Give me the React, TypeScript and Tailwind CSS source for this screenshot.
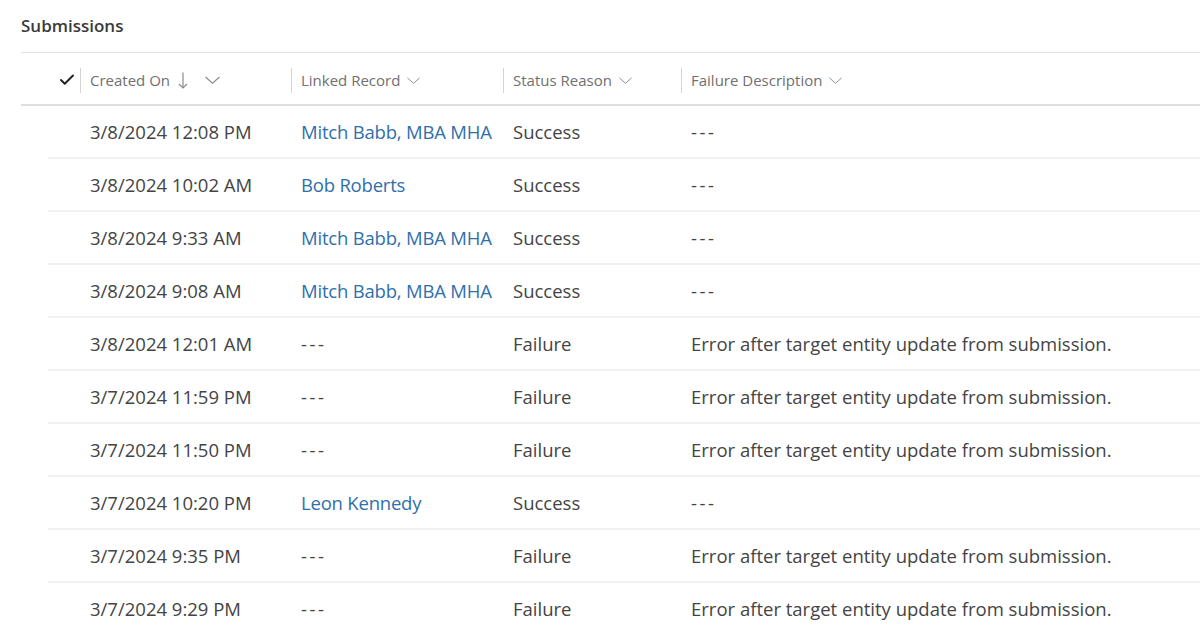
import { Check } from "lucide-react";

type Row = { created: string; linked: string | null; status: string; failure: string | null };

const rows: Row[] = [
  { created: "3/8/2024 12:08 PM", linked: "Mitch Babb, MBA MHA", status: "Success", failure: null },
  { created: "3/8/2024 10:02 AM", linked: "Bob Roberts", status: "Success", failure: null },
  { created: "3/8/2024 9:33 AM", linked: "Mitch Babb, MBA MHA", status: "Success", failure: null },
  { created: "3/8/2024 9:08 AM", linked: "Mitch Babb, MBA MHA", status: "Success", failure: null },
  { created: "3/8/2024 12:01 AM", linked: null, status: "Failure", failure: "Error after target entity update from submission." },
  { created: "3/7/2024 11:59 PM", linked: null, status: "Failure", failure: "Error after target entity update from submission." },
  { created: "3/7/2024 11:50 PM", linked: null, status: "Failure", failure: "Error after target entity update from submission." },
  { created: "3/7/2024 10:20 PM", linked: "Leon Kennedy", status: "Success", failure: null },
  { created: "3/7/2024 9:35 PM", linked: null, status: "Failure", failure: "Error after target entity update from submission." },
  { created: "3/7/2024 9:29 PM", linked: null, status: "Failure", failure: "Error after target entity update from submission." },
];

const cols = "grid grid-cols-[59px_211px_212px_178px_1fr]";

function Chevron({ className }: { className?: string }) {
  return (
    <svg viewBox="0 0 16 8" className={className} fill="none" stroke="#8a8a8a" strokeWidth={1.1}>
      <polyline points="1,1 8,7.2 15,1" />
    </svg>
  );
}

function SortArrow() {
  return (
    <svg viewBox="0 0 10 17" className="ml-[8px] w-[10px] h-[17px]" fill="none" stroke="#8a8a8a" strokeWidth={1.2}>
      <line x1="5" y1="0.5" x2="5" y2="16" />
      <polyline points="1,12 5,16 9,12" />
    </svg>
  );
}

function HeaderCell({ label, sorted }: { label: string; sorted?: boolean }) {
  return (
    <div className="flex items-center h-full pt-[3px]">
      <div className="w-px h-[25px] bg-[#d4d4d4]" />
      <span className="pl-[9px] text-[15px] text-[#707070]">{label}</span>
      {sorted && <SortArrow />}
      <Chevron className={sorted ? "ml-[16px] w-[17px] h-[8px]" : "ml-[6px] w-[15px] h-[7px]"} />
    </div>
  );
}

function Dashes() {
  return <span className="text-[#444] tracking-[2.5px]">---</span>;
}

export default function App() {
  return (
    <div className="w-[1200px] h-[630px] bg-white overflow-hidden font-['Open_Sans',sans-serif] text-[#333]">
      <div className="pl-[21px]">
        <div className="h-[52px] flex items-center">
          <h1 className="text-[17px] font-semibold text-[#3a3a3a] -mt-[1px]">Submissions</h1>
        </div>
        <div className={`${cols} h-[54px] border-t border-[#e1e1e1] border-b-2 border-b-[#dedede]`}>
          <div className="flex items-center justify-end pr-[4px] pt-[3px]">
            <Check className="w-[18px] h-[18px] text-[#222]" strokeWidth={2.6} />
          </div>
          <HeaderCell label="Created On" sorted />
          <HeaderCell label="Linked Record" />
          <HeaderCell label="Status Reason" />
          <HeaderCell label="Failure Description" />
        </div>
        <div className="pl-[27px]">
          {rows.map((r, i) => (
            <div key={i} className="grid grid-cols-[32px_211px_212px_178px_1fr] h-[53px] border-b-2 border-[#f1f1f1] items-center text-[18.5px] pt-[1px]">
              <div />
              <div className="pl-[10px] text-[#444]">{r.created}</div>
              <div className="pl-[10px]">
                {r.linked ? <span className="text-[#2f6fac] tracking-[-0.2px]">{r.linked}</span> : <Dashes />}
              </div>
              <div className="pl-[10px] text-[#444]">{r.status}</div>
              <div className="pl-[10px] text-[#444]">{r.failure ?? <Dashes />}</div>
            </div>
          ))}
        </div>
      </div>
    </div>
  );
}
